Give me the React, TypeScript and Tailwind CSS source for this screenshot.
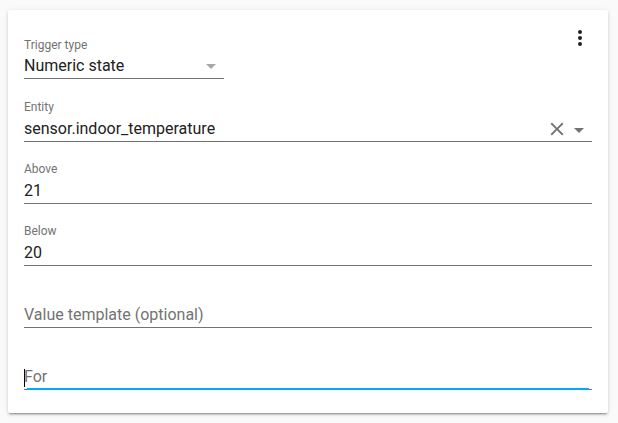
import React from 'react';

const FONT = { fontFamily: 'Roboto, "Noto Sans", sans-serif' };

function Caret({ className }: { className: string }) {
  return (
    <svg width="10" height="5" viewBox="0 0 10 5" className={className}>
      <path d="M0 0L5 5L10 0Z" fill="currentColor" />
    </svg>
  );
}

interface FieldProps {
  label?: string;
  value?: string;
  placeholder?: string;
  focused?: boolean;
  first?: boolean;
  children?: React.ReactNode;
}

function Field({ label, value, placeholder, focused, first, children }: FieldProps) {
  return (
    <div className={first ? 'pt-[20px]' : 'pt-[19px]'}>
      <div className="h-4 text-xs leading-4 text-[#737373]">{label}</div>
      <div className="relative mt-[2px] flex h-[25px] items-center border-b border-[#737373]">
        {focused && <span className="absolute left-0 top-[4px] h-[18px] w-px bg-black" />}
        <span className={`flex-1 text-base leading-6 ${value ? 'text-[#212121]' : 'text-[#737373]'}`}>
          {value ?? placeholder}
        </span>
        {children}
        {focused && <div className="absolute bottom-[-1px] left-[3px] right-[3px] h-[2px] bg-[#03a9f4]" />}
      </div>
    </div>
  );
}

export default function App() {
  return (
    <div className="min-h-screen bg-[#fafafa] px-2 pt-[10px]" style={FONT}>
      <div className="relative w-[600px] rounded-[2px] bg-white px-4 pb-[23px] pt-[27px] shadow-[0_2px_2px_0_rgba(0,0,0,0.14),0_1px_5px_0_rgba(0,0,0,0.12),0_3px_1px_-2px_rgba(0,0,0,0.2)]">
        {/* overflow menu */}
        <button type="button" className="absolute right-4 top-4 h-6 w-6 text-[#212121]" aria-label="menu">
          <svg viewBox="0 0 24 24" width="24" height="24">
            <path
              fill="currentColor"
              d="M12,16A2,2 0 0,1 14,18A2,2 0 0,1 12,20A2,2 0 0,1 10,18A2,2 0 0,1 12,16M12,10A2,2 0 0,1 14,12A2,2 0 0,1 12,14A2,2 0 0,1 10,12A2,2 0 0,1 12,10M12,4A2,2 0 0,1 14,6A2,2 0 0,1 12,8A2,2 0 0,1 10,6A2,2 0 0,1 12,4Z"
            />
          </svg>
        </button>

        {/* trigger type dropdown */}
        <div className="w-[200px]">
          <div className="h-4 text-xs leading-4 text-[#737373]">Trigger type</div>
          <div className="mt-px flex h-[25px] items-center border-b border-[#737373]">
            <span className="flex-1 text-base leading-6 text-[#212121]">Numeric state</span>
            <Caret className="mr-[8px] mt-px text-[#a8a8a8]" />
          </div>
        </div>

        <Field label="Entity" value="sensor.indoor_temperature" first>
          <svg viewBox="0 0 24 24" width="22" height="22" className="mr-[6px] text-[#737373]">
            <path
              fill="currentColor"
              d="M19,6.41L17.59,5L12,10.59L6.41,5L5,6.41L10.59,12L5,17.59L6.41,19L12,13.41L17.59,19L19,17.59L13.41,12L19,6.41Z"
            />
          </svg>
          <Caret className="mr-[8px] mt-[3px] text-[#737373]" />
        </Field>
        <Field label="Above" value="21" />
        <Field label="Below" value="20" />
        <Field placeholder="Value template (optional)" />
        <Field placeholder="For" focused />
      </div>
    </div>
  );
}
